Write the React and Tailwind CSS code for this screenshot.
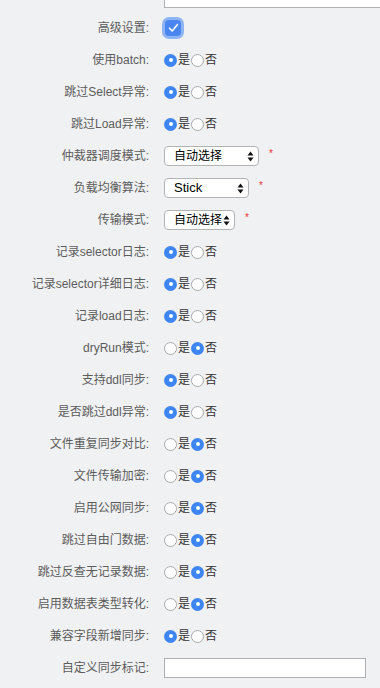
import React from 'react';

const font = { fontFamily: '"Liberation Sans", "Noto Sans CJK SC", sans-serif' };

const rows = [
  { label: '高级设置', type: 'checkbox' },
  { label: '使用batch', type: 'radio', value: true },
  { label: '跳过Select异常', type: 'radio', value: true },
  { label: '跳过Load异常', type: 'radio', value: true },
  { label: '仲裁器调度模式', type: 'select', text: '自动选择', width: 'w-[95px]', size: 'text-[12px]' },
  { label: '负载均衡算法', type: 'select', text: 'Stick', width: 'w-[85px]', size: 'text-[13px]' },
  { label: '传输模式', type: 'select', text: '自动选择', width: 'w-[71px]', size: 'text-[12px]' },
  { label: '记录selector日志', type: 'radio', value: true },
  { label: '记录selector详细日志', type: 'radio', value: true },
  { label: '记录load日志', type: 'radio', value: true },
  { label: 'dryRun模式', type: 'radio', value: false },
  { label: '支持ddl同步', type: 'radio', value: true },
  { label: '是否跳过ddl异常', type: 'radio', value: true },
  { label: '文件重复同步对比', type: 'radio', value: false },
  { label: '文件传输加密', type: 'radio', value: false },
  { label: '启用公网同步', type: 'radio', value: false },
  { label: '跳过自由门数据', type: 'radio', value: false },
  { label: '跳过反查无记录数据', type: 'radio', value: false },
  { label: '启用数据表类型转化', type: 'radio', value: false },
  { label: '兼容字段新增同步', type: 'radio', value: true },
  { label: '自定义同步标记', type: 'input' },
];

function Radio({ checked }) {
  return checked ? (
    <span className="inline-flex h-[13px] w-[13px] items-center justify-center rounded-full bg-[#3f86f5]">
      <span className="h-[4px] w-[4px] rounded-full bg-white" />
    </span>
  ) : (
    <span className="inline-block h-[13px] w-[13px] rounded-full border border-[#a9a9a9] bg-white" />
  );
}

function RadioPair({ value }) {
  return (
    <div className="flex items-center text-[12px] text-[#333]">
      <Radio checked={value} />
      <span className="ml-px">是</span>
      <span className="ml-px" />
      <Radio checked={!value} />
      <span className="ml-px">否</span>
    </div>
  );
}

function Select({ text, width, size }) {
  return (
    <div className="flex items-center">
      <div
        className={`${width} ${size} flex h-[20px] items-center justify-between whitespace-nowrap rounded-[4px] border border-[#b3b3b3] bg-white pl-[9px] pr-[4px] text-black`}
      >
        <span>{text}</span>
        <svg width="7" height="11" viewBox="0 0 7 11" className="shrink-0">
          <path d="M3.5 0.5 L6.5 4.5 L0.5 4.5 Z" fill="#111" />
          <path d="M3.5 10.5 L6.5 6.5 L0.5 6.5 Z" fill="#111" />
        </svg>
      </div>
      <span className="ml-[10px] -mt-[6px] text-[10px] text-[#e33]">*</span>
    </div>
  );
}

function Checkbox() {
  return (
    <span className="ml-[1px] inline-flex h-[16px] w-[16px] items-center justify-center rounded-[4px] bg-[#4a86f0] ring-[3px] ring-[#8fb4f6]">
      <svg width="11" height="10" viewBox="0 0 11 10">
        <path d="M1.5 5.2 L4.2 8 L9.5 1.5" stroke="white" strokeWidth="1.6" fill="none" strokeLinecap="round" strokeLinejoin="round" />
      </svg>
    </span>
  );
}

export default function App() {
  return (
    <div className="min-h-[688px] w-[380px] overflow-hidden bg-[#f0f1f3]" style={font}>
      {/* bottom edge of the input above */}
      <div className="ml-[164px] h-[8px] w-[240px] border border-t-0 border-[#b0b0b0] bg-white" />
      <div className="mt-[4px]">
        {rows.map((row) => (
          <div key={row.label} className="flex h-[32px] items-center">
            <div className="w-[149px] shrink-0 text-right text-[12px] text-[#5c5c5c]">
              {row.label}:
            </div>
            <div className="ml-[15px]">
              {row.type === 'checkbox' && <Checkbox />}
              {row.type === 'radio' && <RadioPair value={row.value} />}
              {row.type === 'select' && <Select text={row.text} width={row.width} size={row.size} />}
              {row.type === 'input' && (
                <div className="h-[20px] w-[202px] border border-[#b0b0b0] bg-white" />
              )}
            </div>
          </div>
        ))}
      </div>
    </div>
  );
}
